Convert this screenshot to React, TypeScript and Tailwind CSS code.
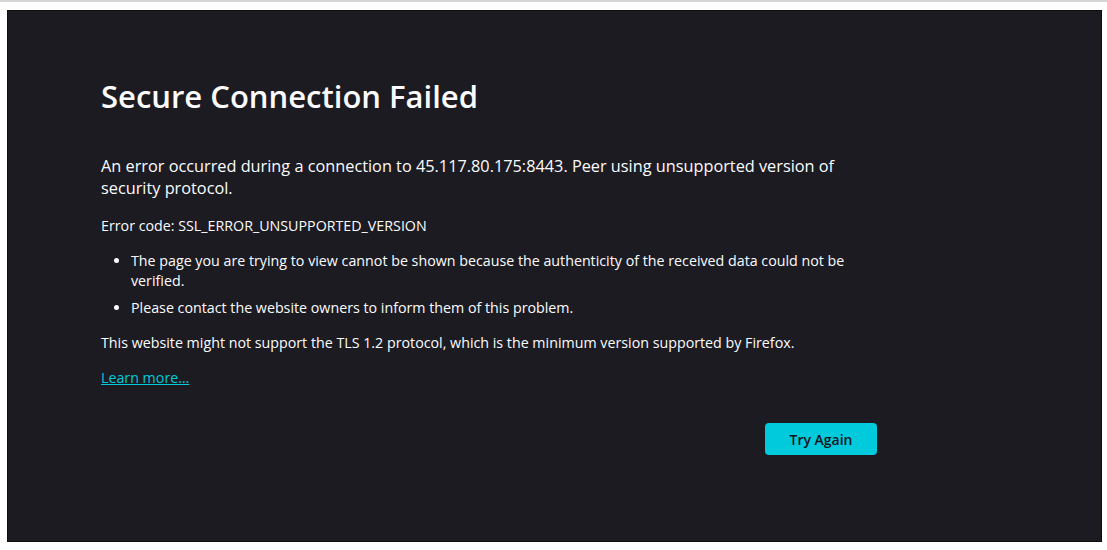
export default function App() {
  return (
    <div className="h-[550px] w-full bg-white font-['Open_Sans','Noto_Sans',sans-serif] flex flex-col">
      {/* top edge */}
      <div className="h-[2px] bg-[#d4d4d4]" />
      <div className="flex-1 pl-[7px] pr-[5px] pt-[8px] pb-[8px] flex">
        <div className="flex-1 bg-[#1c1b22] border border-[#0e0d12] text-[#fbfbfe]">
          <div className="ml-[93px] w-[776px] pt-[65px]">
            <h1 className="text-[31px] leading-[40px] font-semibold">Secure Connection Failed</h1>
            <p className="mt-[39px] pr-[10px] text-[16.3px] leading-[22px]">
              An error occurred during a connection to 45.117.80.175:8443. Peer using unsupported version of
              security protocol.
            </p>
            <p className="mt-[17px] text-[14.25px] leading-[20px]">Error code: SSL_ERROR_UNSUPPORTED_VERSION</p>
            <ul className="mt-[15px] text-[14.25px] leading-[20px] list-disc pl-[30px] pr-[20px] flex flex-col gap-[7px]">
              <li>
                The page you are trying to view cannot be shown because the authenticity of the received data could
                not be verified.
              </li>
              <li>Please contact the website owners to inform them of this problem.</li>
            </ul>
            <p className="mt-[15px] text-[14.25px] leading-[20px]">
              This website might not support the TLS 1.2 protocol, which is the minimum version supported by Firefox.
            </p>
            <p className="mt-[15px] text-[14.25px] leading-[20px]">
              <a href="#" className="text-[#00cadb] underline">Learn more…</a>
            </p>
            <div className="mt-[35px] flex justify-end">
              <button className="h-[32px] w-[112px] rounded-[4px] bg-[#00cadb] text-[#15141a] text-[14px] font-semibold">
                Try Again
              </button>
            </div>
          </div>
        </div>
      </div>
    </div>
  )
}
